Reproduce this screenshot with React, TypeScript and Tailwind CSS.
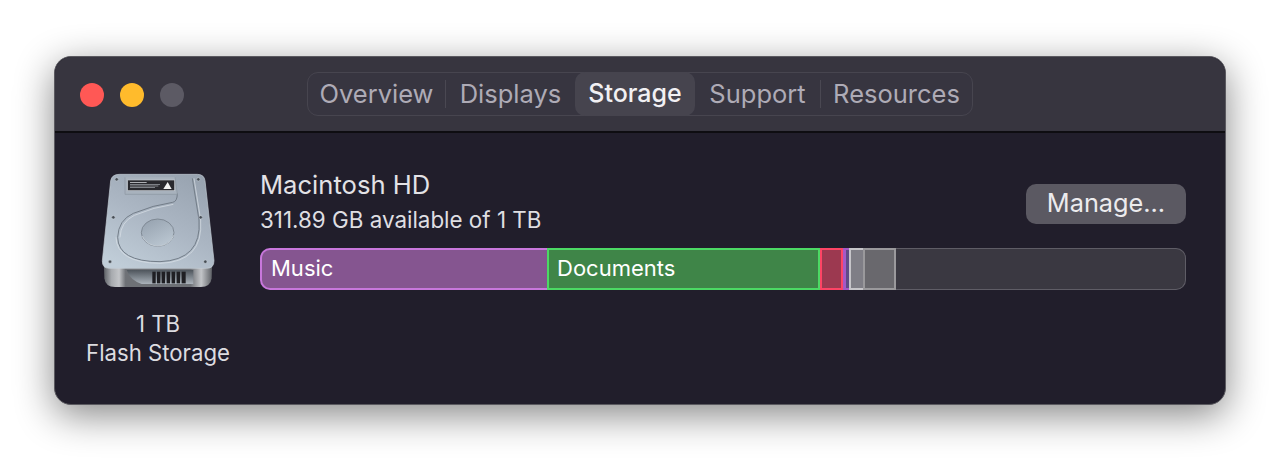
import React from "react";

const tabs = [
  { t: "Overview", w: "w-[137px]", divider: true },
  { t: "Displays", w: "w-[129px]", divider: false },
  { t: "Storage", w: "w-[120px]", divider: false },
  { t: "Support", w: "w-[125px]", divider: true },
  { t: "Resources", w: "w-[151px]", divider: false },
];

function Disk() {
  return (
    <svg width="120" height="120" viewBox="60 30 360 360" className="block">
      <defs>
        <linearGradient id="top" x1="0.8" y1="0" x2="0.2" y2="1">
          <stop offset="0" stopColor="#98a3b0" />
          <stop offset="0.5" stopColor="#abb6c3" />
          <stop offset="1" stopColor="#c0cdd8" />
        </linearGradient>
        <linearGradient id="base" x1="0" y1="0" x2="1" y2="0">
          <stop offset="0" stopColor="#5e6166" />
          <stop offset="0.07" stopColor="#a8abaf" />
          <stop offset="0.14" stopColor="#c3c5c8" />
          <stop offset="0.2" stopColor="#6e7176" />
          <stop offset="0.8" stopColor="#6e7176" />
          <stop offset="0.9" stopColor="#c3c5c8" />
          <stop offset="1" stopColor="#5e6166" />
        </linearGradient>
        <linearGradient id="platter" x1="0.2" y1="0" x2="0.8" y2="1">
          <stop offset="0" stopColor="#97a3b0" />
          <stop offset="1" stopColor="#bcc8d3" />
        </linearGradient>
        <linearGradient id="fan" x1="0" y1="0" x2="0" y2="1">
          <stop offset="0" stopColor="#4e555c" />
          <stop offset="1" stopColor="#aab2ba" />
        </linearGradient>
      </defs>
      {/* base */}
      <path d="M72 320 L396 320 L395 355 Q392 381 362 381 L105 381 Q76 381 73 355 Z" fill="url(#base)" />
      <path d="M140 330 L340 330 L340 372 L185 372 Q150 360 140 330 Z" fill="url(#fan)" />
      <g fill="#1f1f23">
        <rect x="217" y="335" width="10" height="35" />
        <rect x="231" y="335" width="10" height="35" />
        <rect x="245" y="335" width="10" height="35" />
        <rect x="260" y="335" width="10" height="35" />
        <rect x="275" y="335" width="10" height="35" />
        <rect x="290" y="335" width="10" height="35" />
        <rect x="305" y="335" width="12" height="35" />
      </g>
      {/* top plate */}
      <path d="M118 43 L352 43 Q372 43 375 62 L402 302 Q402 325 380 325 L88 325 Q66 325 67 302 L92 62 Q96 43 118 43 Z" fill="url(#top)" stroke="#c6ced6" strokeWidth="2" />
      {/* groove */}
      <path d="M337 55 L357 180 Q366 300 240 305 Q115 305 113 232 Q115 180 160 160 Q220 135 278 127 Q292 125 292 100" fill="none" stroke="#737d88" strokeWidth="3" />
      <path d="M342 55 L362 180 Q371 306 240 310 Q110 308 108 232" fill="none" stroke="#dde3e9" strokeWidth="2" />
      <path d="M120 232 Q122 186 163 166 Q222 141 280 133" fill="none" stroke="#dde3e9" strokeWidth="2" />
      {/* label plate */}
      <path d="M135 52 L135 103 L292 103 L285 52" fill="#a8b2bd" stroke="#8b95a0" strokeWidth="2" />
      <rect x="143" y="60" width="141" height="32" fill="#29292e" stroke="#c3c8ce" strokeWidth="2" />
      <rect x="150" y="66" width="50" height="2.5" fill="#c8cbd0" />
      <rect x="150" y="72" width="90" height="2" fill="#aaaeb4" />
      <rect x="150" y="77" width="85" height="2" fill="#aaaeb4" />
      <rect x="150" y="82" width="75" height="2" fill="#aaaeb4" />
      <path d="M263 66 L275 87 L250 87 Z" fill="#f2f2f2" />
      {/* platter */}
      <ellipse cx="233" cy="218" rx="49" ry="41" fill="url(#platter)" stroke="#77818c" strokeWidth="2.5" />
      <path d="M186 228 Q200 257 233 258 Q270 257 281 226" fill="none" stroke="#d8dfe6" strokeWidth="2" />
      {/* screws */}
      <g fill="#454c54" stroke="#c9d0d7" strokeWidth="1.5">
        <circle cx="110" cy="58" r="5" />
        <circle cx="355" cy="58" r="5" />
        <circle cx="100" cy="172" r="5" />
        <circle cx="362" cy="172" r="5" />
        <circle cx="90" cy="305" r="5" />
        <circle cx="376" cy="305" r="5" />
      </g>
    </svg>
  );
}

export default function App() {
  return (
    <div className="w-[1280px] h-[461px] bg-white overflow-hidden pt-[56px] pl-[54px] font-['Inter',sans-serif]">
      <div className="w-[1172px] h-[349px] rounded-[17px] overflow-hidden flex flex-col bg-[#211e2b] border border-[#5b5a60] shadow-[0_10px_38px_rgba(0,0,0,0.48)]">
        <div className="h-[76px] shrink-0 bg-[#37353f] border-b-2 border-[#0e0d11] flex items-center pl-[25px]">
          <div className="flex gap-[16px] w-[227px] shrink-0 pt-[1px]">
            <span className="w-6 h-6 rounded-full bg-[#ff5855]" />
            <span className="w-6 h-6 rounded-full bg-[#ffbb2c]" />
            <span className="w-6 h-6 rounded-full bg-[#5c5a64]" />
          </div>
          <div className="flex items-center w-[666px] h-[44px] mb-[1px] rounded-[11px] border border-[#47454f] bg-[#373540]">
            {tabs.map(({ t, w, divider }) => {
              const active = t === "Storage";
              return (
                <React.Fragment key={t}>
                  <div
                    className={
                      active
                        ? `${w} h-[44px] flex items-center justify-center rounded-[10px] bg-[#46444e] text-[#f1f0f3] font-medium text-[25px] leading-none`
                        : `${w} h-[42px] flex items-center justify-center text-[#aeabb6] text-[25.5px] leading-none`
                    }
                  >
                    {t}
                  </div>
                  {divider && <span className="w-px h-[28px] bg-[#4a4852]" />}
                </React.Fragment>
              );
            })}
          </div>
        </div>
        <div className="flex flex-1 pl-[27px] pr-[39px] pt-[38px]">
          <div className="w-[152px] shrink-0 flex flex-col items-center text-[#dddce0] text-[22.2px] leading-[29px] mr-[26px]">
            <div className="h-[120px] mb-[19px] -mt-[1px] ml-[4px]"><Disk /></div>
            <div>1 TB</div>
            <div className="whitespace-nowrap">Flash Storage</div>
          </div>
          <div className="flex-1 min-w-0 -mt-[1px]">
            <div className="flex justify-between items-start h-[78px]">
              <div>
                <div className="text-[#e3e2e6] text-[25.6px] leading-[30px]">Macintosh HD</div>
                <div className="text-[#dfdee2] text-[22.4px] leading-[28px] mt-[6px]">311.89 GB available of 1 TB</div>
              </div>
              <div className="w-[160px] h-[40px] mt-[14px] pb-[2px] rounded-[10px] bg-[#5b5962] text-[#ecebee] text-[25.3px] flex items-center justify-center">Manage...</div>
            </div>
            <div className="flex h-[42px] text-white text-[22px]">
              <div className="w-[287px] pb-[2px] rounded-l-[10px] border-2 border-r-0 border-[#c877dc] bg-[#855590] flex items-center pl-[9px]">Music</div>
              <div className="w-[273px] pb-[2px] border-2 border-[#4cd964] bg-[#3f8548] flex items-center pl-[8px]">Documents</div>
              <div className="w-[23px] border-2 border-[#fd4465] bg-[#9c3950]" />
              <div className="w-[6px] border-y-2 border-l-[3px] border-[#a558c6] bg-[#5f4a86]" />
              <div className="w-[14px] border-y-2 border-l-2 border-[#c6c5c9] bg-[#7f7e86]" />
              <div className="w-[33px] border-2 border-[#9a999c] bg-[#69686d]" />
              <div className="flex-1 rounded-r-[10px] border border-l-0 border-[#5f5d66] bg-[#3a3841]" />
            </div>
          </div>
        </div>
      </div>
    </div>
  );
}
